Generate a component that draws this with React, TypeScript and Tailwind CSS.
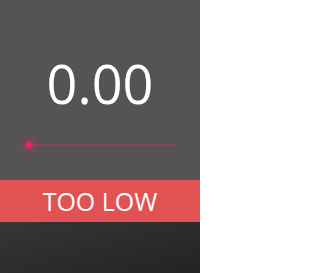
export default function App() {
  return (
    <div className="flex h-[273px] w-[200px] flex-col font-['Open_Sans',sans-serif]">
      <div className="flex h-[180px] flex-col items-center bg-[#545454] pt-[56px]">
        <div className="text-[54px] leading-none text-white">0.00</div>
        <div className="relative mt-[32px] h-[6px] w-[150px] translate-x-[1px]">
          <div className="absolute left-[3px] right-0 top-[2px] h-[2px] bg-[#b03866] opacity-60" />
          <div className="absolute left-0 top-0 h-[6px] w-[6px] rounded-full bg-[#f5205a] shadow-[0_0_6px_3px_rgba(240,36,90,0.45)]" />
        </div>
      </div>
      <div className="flex h-[42px] items-center justify-center bg-[#e25252] text-[25px] leading-none text-white">
        TOO LOW
      </div>
      <div className="flex-1 bg-gradient-to-br from-[#363636] to-[#232323]" />
    </div>
  );
}
